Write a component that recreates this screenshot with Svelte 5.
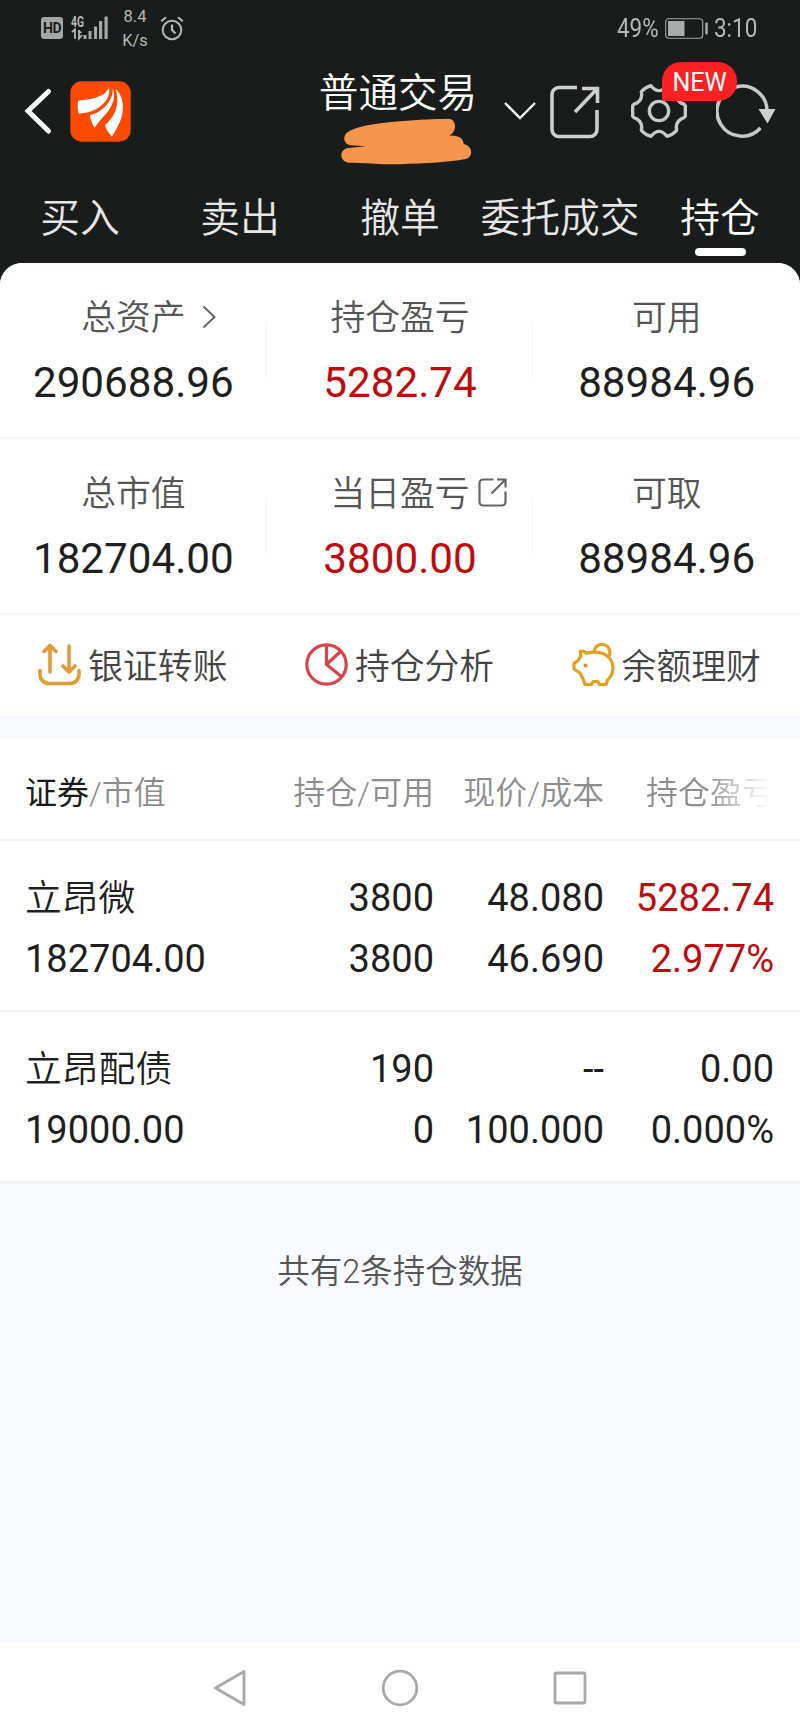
<script>
  let activeTab = '持仓';
  const tabs = ['买入', '卖出', '撤单', '委托成交', '持仓'];

  const summary = [
    [
      { label: '总资产', value: '290688.96', icon: 'chevron' },
      { label: '持仓盈亏', value: '5282.74', up: true },
      { label: '可用', value: '88984.96' }
    ],
    [
      { label: '总市值', value: '182704.00' },
      { label: '当日盈亏', value: '3800.00', up: true, icon: 'share' },
      { label: '可取', value: '88984.96' }
    ]
  ];

  const positions = [
    {
      name: '立昂微',
      marketValue: '182704.00',
      held: '3800',
      available: '3800',
      price: '48.080',
      cost: '46.690',
      profit: '5282.74',
      rate: '2.977%',
      up: true
    },
    {
      name: '立昂配债',
      marketValue: '19000.00',
      held: '190',
      available: '0',
      price: '--',
      cost: '100.000',
      profit: '0.00',
      rate: '0.000%',
      up: false
    }
  ];
</script>

<div class="screen">
  <header>
    <div class="status">
      <span class="hd">HD</span>
      <svg class="signal" width="38" height="26" viewBox="0 0 38 26">
        <text x="0" y="11.5" textLength="13" lengthAdjust="spacingAndGlyphs">4G</text>
        <path d="M1 17l3-2.5V24M8 15v8.500l3-3.500M8 18l2.500-1" fill="none" stroke="#b4b8b6" stroke-width="1.8" />
        <path d="M12.500 20h3v4h-3zM17.500 16h3v8h-3zM23 11.500h3V24h-3zM28 6h3.200v18H28zM33.500 1.500h3.200V24h-3.200z" fill="#a3a7a5" />
      </svg>
      <span class="speed">8.4<br />K/s</span>
      <svg class="alarm" width="24" height="25" viewBox="0 0 24 25" fill="none" stroke="#b4b8b6">
        <circle cx="12" cy="14" r="9.300" stroke-width="2" />
        <path d="M12 8.500V14l3.500 3.500" stroke-width="2.200" />
        <path d="M1.200 5.200L6 1.200M22.800 5.200L18 1.200" stroke-width="2" />
      </svg>
      <span class="percent">49%</span>
      <svg class="battery" width="43" height="21" viewBox="0 0 43 21">
        <rect x=".7" y=".7" width="37" height="19.500" rx="3" fill="none" stroke="#a3a7a5" stroke-width="1.100" />
        <rect x="3" y="3" width="16.500" height="15" fill="#a8acaa" />
        <rect x="40.300" y="4.500" width="2.500" height="12" rx="1" fill="#a8acaa" />
      </svg>
      <span class="clock">3:10</span>
    </div>

    <div class="bar">
      <svg class="back" width="30" height="50" viewBox="0 0 30 50" fill="none" stroke="#fff" stroke-width="5" stroke-linecap="round" stroke-linejoin="miter">
        <path d="M24.500 5.500L4 25l20.500 20" />
      </svg>
      <svg class="logo" width="61" height="61" viewBox="210 243 183 183">
        <rect x="211" y="244" width="181" height="181" rx="34" fill="#fd4a03" />
        <g fill="#fff">
          <path d="M327 261C333 287 316 312 288 328C270 337 251 340 236 341C233 327 232 314 234 303C243 298 264 300 287 293C309 286 321 277 327 261Z" />
          <path d="M338 265C347 287 341 307 330 325C318 345 301 358 284 383C276 371 271 359 270 345C291 341 312 327 326 306C335 293 340 280 338 265Z" />
          <path d="M347 267C366 285 371 308 368 333C365 364 348 389 336 410C325 399 318 387 315 375C332 361 347 340 351 315C354 296 351 280 347 267Z" />
        </g>
      </svg>
      <div class="account">
        <span class="title">普通交易</span>
        <svg width="131" height="47" viewBox="1023 352 393 141">
          <path fill="#f6964c" d="M1050 390C1090 372 1150 366 1200 362C1260 356 1300 355 1345 354C1370 354 1373 394 1346 405C1378 403 1391 415 1391 430C1421 437 1420 472 1393 476C1350 484 1280 488 1200 491C1150 492 1090 486 1045 486C1017 482 1017 446 1045 442L1098 437L1050 434C1028 428 1026 400 1050 390Z" />
        </svg>
      </div>
      <svg class="down" width="32" height="20" viewBox="0 0 32 20" fill="none" stroke="#fff" stroke-width="2.300">
        <path d="M1 2l15 15L31 2" />
      </svg>
      <svg class="share" width="50" height="54" viewBox="0 0 50 54" fill="none" stroke="#cfcfcf" stroke-width="3.600">
        <path d="M27 2.500H9A7 7 0 0 0 2 9.500v35A7 7 0 0 0 9 51.500H40a7 7 0 0 0 7-7V25M32 3.500h15.500V18M47 4L25 27" />
      </svg>
      <div class="settings">
        <svg width="56" height="56" viewBox="-84 -84 168 168" fill="none" stroke="#c8c8c8" stroke-width="10" stroke-linejoin="round">
          <path d="M79 16Q76 22 66 24Q48 36 53 58Q40 72 24 76Q0 46-24 76Q-40 72-53 58Q-48 36-66 24Q-76 22-79 16V-16Q-76-22-66-24Q-48-36-53-58Q-40-72-24-76Q0-46 24-76Q40-72 53-58Q48-36 66-24Q76-22 79-16Z" />
          <circle r="29" />
        </svg>
        <span class="badge">NEW</span>
      </div>
      <svg class="refresh" width="60" height="55" viewBox="0 0 60 55">
        <path d="M44.500 44A25 25 0 1 1 51 28" fill="none" stroke="#c8c8c8" stroke-width="3.500" />
        <path d="M42.500 25h17L51.500 39.500z" fill="#cfcfcf" />
      </svg>
    </div>

    <nav>
      {#each tabs as tab}
        <button type="button" class:active={tab === activeTab} on:click={() => (activeTab = tab)}>{tab}</button>
      {/each}
    </nav>
  </header>

  <main>
    <section class="overview">
      {#each summary as row}
        <div class="row">
          {#each row as item}
            <div class="cell">
              <div class="label">
                {item.label}
                {#if item.icon === 'chevron'}
                  <svg class="more" width="14" height="24" viewBox="0 0 14 24" fill="none" stroke="#666" stroke-width="2">
                    <path d="M1.500 1.500L12.500 12l-11 10.500" />
                  </svg>
                {:else if item.icon === 'share'}
                  <svg class="open" width="29" height="29" viewBox="0 0 29 29" fill="none" stroke="#666" stroke-width="2.200">
                    <path d="M15.500 1.500H5a3.500 3.500 0 0 0-3.500 3.500v19A3.500 3.500 0 0 0 5 27.500h19a3.500 3.500 0 0 0 3.500-3.500V13.500M19 1.500h8.500V9.500M27 2L13.500 15.500" />
                  </svg>
                {/if}
              </div>
              <div class="value" class:up={item.up}>{item.value}</div>
            </div>
          {/each}
        </div>
      {/each}

      <div class="actions">
        <div class="action">
          <svg width="43" height="43" viewBox="0 0 43 43" fill="none" stroke="#e49a37" stroke-width="3.600" stroke-linecap="round" stroke-linejoin="round">
            <path d="M12 29V3M6 8.500L12 2.500l6 6M31 3v25M25 23l6 6 6-6" />
            <path d="M2 27.500v4a9 9 0 0 0 9 9h21a9 9 0 0 0 9-9v-4" />
          </svg>
          <span>银证转账</span>
        </div>
        <div class="action">
          <svg width="43" height="43" viewBox="0 0 43 43" fill="none" stroke="#d9434b" stroke-width="3.200">
            <circle cx="21.500" cy="21.500" r="19.700" />
            <path d="M21.500 2v19.500L37 34M21.500 21.500L36 8" />
          </svg>
          <span>持仓分析</span>
        </div>
        <div class="action">
          <svg width="43" height="43" viewBox="0 0 43 43" fill="none" stroke="#e4a01c" stroke-width="3.200" stroke-linejoin="round">
            <path d="M8 8.500c3-1 5 0 6.500 1.800C19 9 26 8.700 31 10.500c6 2.500 10 8 10 14 0 6-2.500 10-5.500 12.500l-1.500 4.500h-6.500l-1.500-3h-5l-1.500 3H13l-1.500-4.500L8 30l-6-4v-5.500l4-3 3-4.500z" />
            <path d="M22 8.500C23 4 26 1.500 30 1.500c5 0 8 4 8 8 0 2-.5 3-1.500 4.500" />
            <circle cx="13.500" cy="22.500" r="2" fill="#d98e2c" stroke="none" />
          </svg>
          <span>余额理财</span>
        </div>
      </div>
    </section>

    <section class="positions">
      <div class="line head">
        <span><b>证券</b>/市值</span>
        <span>持仓/可用</span>
        <span>现价/成本</span>
        <span class="fade">持仓盈亏</span>
      </div>
      {#each positions as p}
        <div class="line">
          <span class="name">{p.name}</span>
          <span>{p.held}</span>
          <span>{p.price}</span>
          <span class:up={p.up}>{p.profit}</span>
          <span>{p.marketValue}</span>
          <span>{p.available}</span>
          <span>{p.cost}</span>
          <span class:up={p.up}>{p.rate}</span>
        </div>
      {/each}
    </section>

    <p class="count">共有{positions.length}条持仓数据</p>
  </main>

  <footer>
    <svg width="34" height="38" viewBox="0 0 34 38"><path d="M31 2.500v33L2.500 19z" /></svg>
    <svg width="38" height="38" viewBox="0 0 38 38"><circle cx="19" cy="19" r="16.800" /></svg>
    <svg width="34" height="34" viewBox="0 0 34 34"><rect x="2" y="2" width="30" height="30" rx="1" /></svg>
  </footer>
</div>

<style>
  :global(body) {
    margin: 0;
    background: #181c1b;
  }

  .screen {
    display: flex;
    flex-direction: column;
    width: 800px;
    height: 1733px;
    overflow: hidden;
    background: #181c1b;
    font-family: Roboto, "Noto Sans CJK SC", sans-serif;
    color: #1f1f1f;
    white-space: nowrap;
  }

  svg {
    display: block;
    flex: none;
  }

  .status {
    display: flex;
    align-items: center;
    box-sizing: border-box;
    height: 56px;
    padding: 0 0 0 41px;
    color: #b4b8b6;
  }

  .hd {
    width: 22px;
    height: 22px;
    border-radius: 3px;
    background: #a3a7a5;
    color: #181c1b;
    font-size: 14px;
    font-weight: 700;
    line-height: 22px;
    text-align: center;
    letter-spacing: -0.5px;
  }

  .signal {
    margin-left: 8px;
    margin-top: -1px;
  }

  .signal text {
    font-size: 14px;
    font-weight: 700;
    fill: #b4b8b6;
  }

  .speed {
    width: 30px;
    margin-left: 11px;
    margin-top: 1px;
    font-size: 16.5px;
    line-height: 24px;
    text-align: center;
  }

  .alarm {
    margin-left: 10px;
  }

  .percent, .clock {
    font-size: 25.5px;
    transform: scaleX(0.88);
    transform-origin: left;
  }

  .percent {
    width: 47px;
    margin-left: 433px;
  }

  .battery {
    margin-left: 1px;
  }

  .clock {
    margin-left: 6px;
  }

  .bar {
    display: flex;
    align-items: flex-start;
    height: 124px;
  }

  .back {
    margin: 30px 0 0 24px;
  }

  .logo {
    margin: 25px 0 0 16px;
  }

  .account {
    display: flex;
    flex-direction: column;
    align-items: center;
    width: 170px;
    margin: 13px 0 0 190px;
  }

  .title {
    color: #fff;
    font-size: 39.6px;
    font-weight: 350;
    line-height: 49px;
    margin-left: -16px;
  }

  .down {
    margin: 45px 0 0 13px;
  }

  .share {
    margin: 29px 0 0 14px;
  }

  .settings {
    position: relative;
    margin: 27px 0 0 31px;
  }

  .badge {
    position: absolute;
    left: 31px;
    top: -21px;
    width: 75px;
    height: 39px;
    border-radius: 19px 19px 19px 3px;
    background: #fb2021;
    color: #fff;
    font-size: 25px;
    line-height: 41px;
    text-align: center;
  }

  .refresh {
    margin: 28px 0 0 29px;
  }

  nav {
    display: flex;
    height: 83px;
  }

  nav button {
    display: flex;
    flex-direction: column;
    align-items: center;
    width: 160px;
    padding: 10px 0 0;
    border: none;
    background: none;
    color: #e6e6e6;
    font: 350 39.8px/58px Roboto, "Noto Sans CJK SC", sans-serif;
  }

  nav .active {
    color: #fff;
  }

  nav .active::after {
    content: "";
    width: 51px;
    height: 8px;
    border-radius: 4px;
    background: #fff;
  }

  main {
    flex: 1;
    border-radius: 22px 22px 0 0;
    background: #f7fbff;
    overflow: hidden;
  }

  .overview, .positions {
    background: #fff;
  }

  .row {
    display: flex;
    box-sizing: border-box;
    height: 176px;
    border-bottom: 2px solid #f5f5f5;
  }

  .cell {
    flex: 1;
    padding-top: 31px;
    background: linear-gradient(#f2f2f2, #f2f2f2) right 60px / 1px 55px no-repeat;
  }

  .cell:last-child {
    background: none;
  }

  .label {
    display: flex;
    align-items: center;
    justify-content: center;
    color: #555;
    font-size: 34.8px;
    font-weight: 350;
    line-height: 48px;
  }

  .more {
    margin: -3px -30px 0 16px;
  }

  .open {
    margin: -4px -37px 0 8px;
  }

  .value {
    margin-top: 17px;
    font-size: 42.2px;
    line-height: 48px;
    text-align: center;
  }

  .up {
    color: #bf0a0e;
  }

  .actions {
    display: flex;
    height: 101px;
  }

  .action {
    display: flex;
    flex: 1;
    align-items: center;
    justify-content: center;
    gap: 7px;
    color: #444;
    font-size: 34.8px;
    font-weight: 350;
  }

  .action svg {
    margin-left: -1px;
    margin-bottom: 2px;
  }

  .action span {
    margin-bottom: 4px;
  }

  .positions {
    margin-top: 22px;
  }

  .line {
    display: grid;
    grid-template-columns: 239px 170px 170px 170px;
    box-sizing: border-box;
    height: 171px;
    padding: 27px 26px 0 25px;
    border-bottom: 2px solid #f2f2f2;
    font-size: 38px;
    line-height: 60px;
    grid-auto-rows: 60.5px;
    text-align: right;
  }

  .line span:nth-child(4n + 1) {
    text-align: left;
  }

  .line .name {
    font-size: 36.8px;
    font-weight: 350;
    line-height: 62px;
  }

  .head {
    height: 103px;
    padding-top: 25px;
    color: #8c8c8c;
    font-size: 32px;
    font-weight: 350;
  }

  .head b {
    color: #1a1a1a;
    font-weight: 400;
  }

  .fade {
    mask-image: linear-gradient(to right, #000 60%, rgba(0, 0, 0, 0.4) 80%, transparent 98%);
  }

  .count {
    margin: 64px 0 0;
    color: #555;
    font-size: 32.5px;
    font-weight: 350;
    line-height: 50px;
    text-align: center;
  }

  footer {
    display: flex;
    align-items: center;
    justify-content: center;
    gap: 134px;
    height: 90px;
    margin-left: -1px;
    background: #fff;
  }

  footer svg {
    fill: none;
    stroke: #a8a8a8;
    stroke-width: 2.8;
    stroke-linejoin: round;
  }
</style>
